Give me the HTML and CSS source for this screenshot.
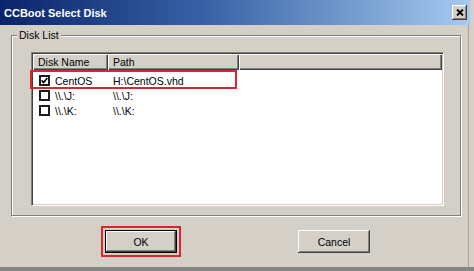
FILE: index.html
```html
<!DOCTYPE html>
<html>
<head>
<meta charset="utf-8">
<title>CCBoot Select Disk</title>
<link rel="stylesheet" href="styles.css">
</head>
<body>
<div class="window">
  <div class="titlebar">
    <span class="title">CCBoot Select Disk</span>
    <span class="close"><svg width="8" height="7" viewBox="0 0 8 7"><path d="M1 0.5 L7 6.5 M7 0.5 L1 6.5" stroke="#000" stroke-width="1.9" fill="none"/></svg></span>
  </div>
  <div class="client">
    <div class="group">
      <span class="group-label">Disk List</span>
      <div class="listview">
        <div class="header">
          <div class="hcell c1">Disk Name</div>
          <div class="hcell c2">Path</div>
          <div class="hcell c3"></div>
        </div>
        <div class="rows">
          <div class="row">
            <div class="cell c1"><span class="check"><svg width="7" height="7" viewBox="0 0 7 7"><path d="M0.6 3.4 L2.6 5.5 L6.4 1" stroke="#000" stroke-width="1.7" fill="none"/></svg></span>CentOS</div>
            <div class="cell c2">H:\CentOS.vhd</div>
          </div>
          <div class="row">
            <div class="cell c1"><span class="check"></span>\\.\J:</div>
            <div class="cell c2">\\.\J:</div>
          </div>
          <div class="row">
            <div class="cell c1"><span class="check"></span>\\.\K:</div>
            <div class="cell c2">\\.\K:</div>
          </div>
        </div>
        <div class="highlight"></div>
      </div>
    </div>
    <div class="buttons">
      <button class="btn default">OK</button>
      <button class="btn">Cancel</button>
    </div>
  </div>
</div>
</body>
</html>
```

FILE: styles.css
```css
* { box-sizing: border-box; }
html, body { margin: 0; padding: 0; }
body {
  width: 474px;
  height: 271px;
  overflow: hidden;
  background: #d4d0c8;
  font-family: "Liberation Sans", Arial, sans-serif;
  font-size: 10.5px;
  color: #000;
}
.window {
  width: 474px;
  height: 271px;
  display: flex;
  flex-direction: column;
  background: #d4d0c8;
  border-bottom: 4px solid #858585;
}
.titlebar {
  height: 25px;
  flex: none;
  margin-right: 4px;
  display: flex;
  align-items: center;
  padding-left: 4px;
  background: linear-gradient(to right, #0a246a 0%, #3a64a8 45%, #a6caf0 100%);
}
.title {
  color: #fff;
  font-weight: bold;
  font-size: 11px;
}
.close {
  margin-left: auto;
  margin-right: 3px;
  width: 15px;
  height: 15px;
  background: #d4d0c8;
  box-shadow: inset -1px -1px 0 #404040, inset 1px 1px 0 #fff, inset -2px -2px 0 #808080;
  display: flex;
  align-items: center;
  justify-content: center;
}
.client {
  flex: 1;
  display: flex;
  flex-direction: column;
  margin-right: 5px;
  border-right: 1px solid #a6a29a;
}
.group {
  position: relative;
  margin: 10px 7px 0 11px;
  height: 181px;
  padding: 16px 16px 9px 19px;
  border: 1px solid #808080;
  box-shadow: inset 1px 1px 0 #fff, 1px 1px 0 #fff;
}
.group-label {
  position: absolute;
  top: -7px;
  left: 5px;
  padding: 0 2px;
  line-height: 13px;
  background: #d4d0c8;
}
.listview {
  position: relative;
  height: 154px;
  padding: 1px;
  background: #fff;
  border: 1px solid;
  border-color: #808080 #fff #fff #808080;
  box-shadow: inset 1px 1px 0 #404040, inset -1px -1px 0 #d4d0c8;
  display: flex;
  flex-direction: column;
}
.header {
  display: flex;
  height: 16px;
  flex: none;
  background: #d4d0c8;
}
.hcell {
  display: flex;
  align-items: center;
  padding-left: 5px;
  box-shadow: inset 1px 1px 0 #fff, inset -1px -1px 0 #404040, inset -2px -2px 0 #808080;
}
.c1 { width: 75px; flex: none; }
.c2 { width: 131px; flex: none; }
.c3 { flex: 1; }
.rows {
  padding-top: 3px;
}
.row {
  display: flex;
  height: 15px;
  align-items: center;
}
.cell {
  display: flex;
  align-items: center;
}
.cell.c1 { padding-left: 6px; }
.cell.c2 { padding-left: 5px; }
.check {
  width: 11px;
  height: 11px;
  margin-right: 5px;
  border: 2px solid #1c1c1c;
  background: #fff;
  display: flex;
  align-items: center;
  justify-content: center;
}
.highlight {
  position: absolute;
  left: -2px;
  top: 17px;
  width: 207px;
  height: 19px;
  border: 2px solid #d42a2f;
}
.buttons {
  display: flex;
  justify-content: center;
  gap: 121px;
  margin-top: 14px;
  padding-left: 7px;
}
.btn {
  width: 72px;
  height: 23px;
  padding: 0;
  border: none;
  background: #d4d0c8;
  font-family: "Liberation Sans", Arial, sans-serif;
  font-size: 10.5px;
  color: #000;
  box-shadow: inset -1px -1px 0 #404040, inset 1px 1px 0 #fff, inset -2px -2px 0 #808080;
}
.btn.default {
  border: 1px solid #000;
  box-shadow: inset -1px -1px 0 #404040, inset 1px 1px 0 #fff, inset -2px -2px 0 #808080;
  outline: 2px solid #d42a2f;
  outline-offset: 2px;
}
```
